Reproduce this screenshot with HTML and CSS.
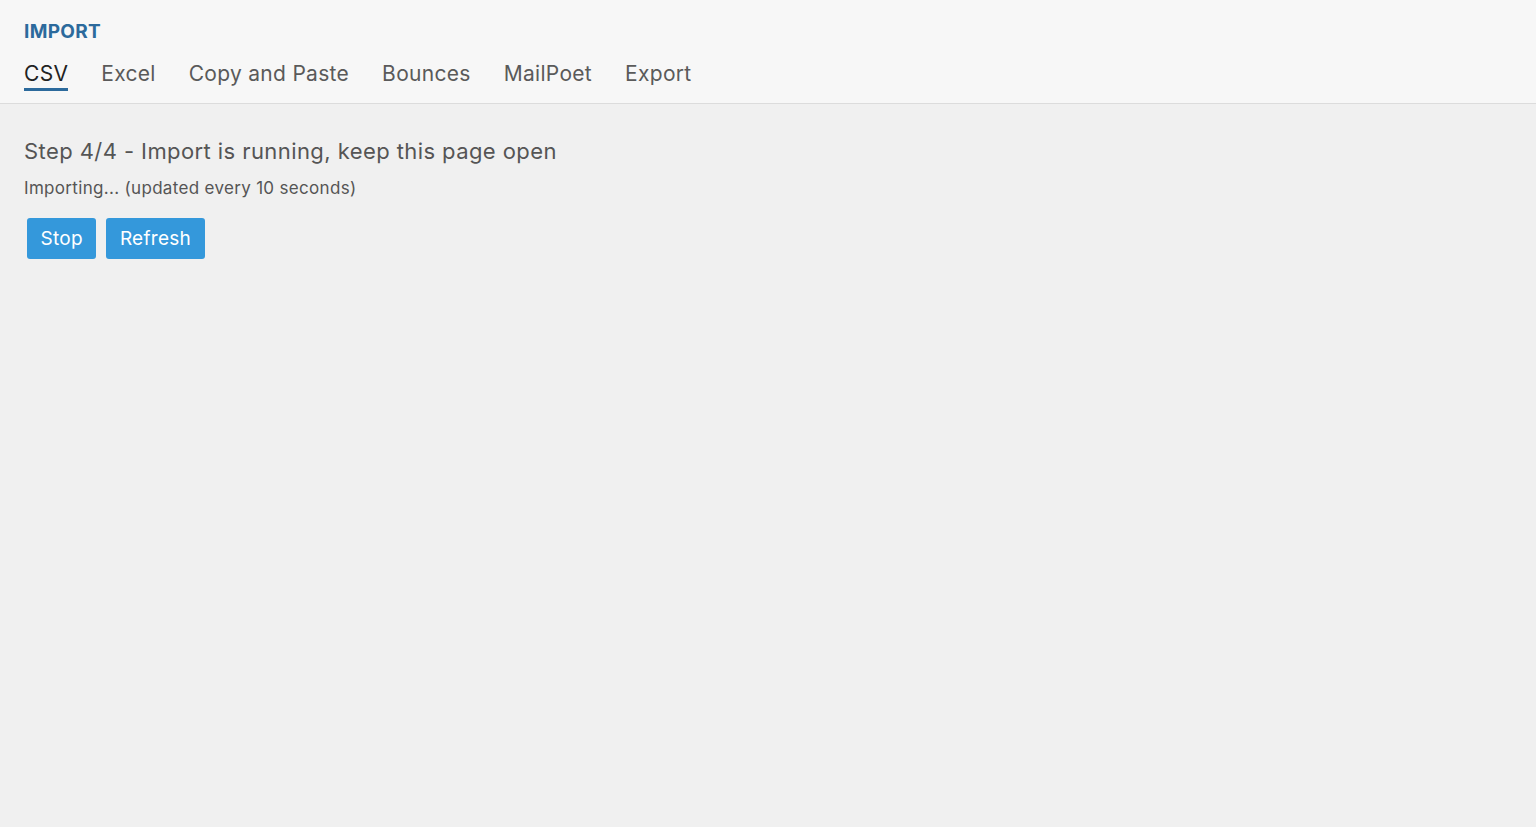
FILE: index.html
```html
<!DOCTYPE html>
<html lang="en">
<head>
  <meta charset="UTF-8">
  <meta name="viewport" content="width=device-width, initial-scale=1.0">
  <title>Import</title>
  <link rel="stylesheet" href="styles.css">
</head>
<body>
  <div class="header">
    <h1 class="title">IMPORT</h1>
    <nav class="tabs">
      <a class="tab active" href="#">CSV</a>
      <a class="tab" href="#">Excel</a>
      <a class="tab" href="#">Copy and Paste</a>
      <a class="tab" href="#">Bounces</a>
      <a class="tab" href="#">MailPoet</a>
      <a class="tab" href="#">Export</a>
    </nav>
  </div>

  <div class="content">
    <h2 class="step">Step 4/4 - Import is running, keep this page open</h2>
    <p class="status">Importing... (updated every 10 seconds)</p>
    <div class="actions">
      <button class="btn">Stop</button>
      <button class="btn">Refresh</button>
    </div>
  </div>
</body>
</html>
```

FILE: styles.css
```css
body {
  font-family: Inter, "Noto Sans", sans-serif;
  letter-spacing: 0.02em;
  margin: 0;
  background-color: #f0f0f0;
  color: #555;
  height: 100vh;
}
.header {
  background-color: #f7f7f7;
  border-bottom: 1px solid #dcdcdc;
  padding: 20px 24px 0;
}
.title {
  margin: 0;
  font-size: 19px;
  font-weight: 700;
  color: #2c6a9c;
  line-height: 24px;
}
.tabs {
  display: flex;
  gap: 33px;
  margin-top: 17px;
}
.tab {
  font-size: 21px;
  letter-spacing: 0.3px;
  color: #5a5a5a;
  text-decoration: none;
  line-height: 26px;
  padding-bottom: 13px;
}
.tab.active {
  color: #222;
  box-shadow: inset 0 -3px 0 #2c6a9c;
  padding-bottom: 0;
  margin-bottom: 12px;
  height: 30px;
}
.content {
  padding: 33px 24px;
}
.step {
  margin: 0;
  font-size: 22px;
  font-weight: 400;
  letter-spacing: 0.42px;
  color: #555;
  line-height: 28px;
}
.status {
  margin: 12px 0 0;
  font-size: 17px;
  color: #555;
  line-height: 22px;
}
.actions {
  display: flex;
  gap: 10px;
  margin-top: 19px;
  padding-left: 3px;
}
.btn {
  font-family: inherit;
  letter-spacing: 0.015em;
  font-size: 19px;
  color: #fff;
  background-color: #3498db;
  border: none;
  border-radius: 3px;
  height: 41px;
  padding: 0 13.5px;
  cursor: pointer;
}
```
